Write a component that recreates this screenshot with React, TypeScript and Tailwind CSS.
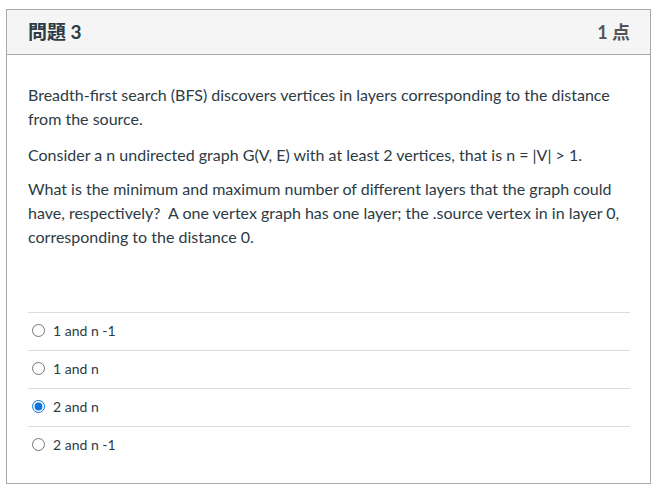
import { useState } from "react";

const ANSWERS = ["1 and n -1", "1 and n", "2 and n", "2 and n -1"];

export default function App() {
  const [selected, setSelected] = useState(2);

  return (
    <div
      className="w-[657px] h-[490px] bg-white pt-[9px] pl-[6px]"
      style={{ fontFamily: "Lato, 'Noto Sans CJK JP', sans-serif" }}
    >
      <div className="w-[645px] h-[475px] border border-[#a9a9a9] flex flex-col text-[#2d3b45]">
        {/* Header */}
        <div className="h-[45px] shrink-0 bg-[#f5f5f5] border-b border-[#a9a9a9] flex items-center justify-between pl-[21px] pr-[20px]">
          <h2 className="text-[19px] font-bold text-[#2d3b45]">問題 3</h2>
          <span className="text-[18px] font-bold text-[#555]">1 点</span>
        </div>

        {/* Body */}
        <div className="flex-1 pl-[21px] pr-[20px] pt-[28px]">
          <div className="text-[16px] leading-[24px]">
            <p className="mb-[12px]">
              Breadth-first search (BFS) discovers vertices in layers corresponding to the distance
              from the source.
            </p>
            <p className="mb-[10px]">
              Consider a n undirected graph G(V, E) with at least 2 vertices, that is n = |V| &gt; 1.
            </p>
            <p>
              What is the minimum and maximum number of different layers that the graph could
              have, respectively?&nbsp; A one vertex graph has one layer; the .source vertex in in
              layer 0, corresponding to the distance 0.
            </p>
          </div>

          <div className="mt-[63px]">
            {ANSWERS.map((a, i) => (
              <label
                key={a}
                className="h-[38px] border-t border-[#dcdcdc] flex items-center gap-[8px] pl-[4px] pb-[3px] text-[14px] cursor-pointer"
              >
                <input
                  type="radio"
                  name="q3"
                  checked={selected === i}
                  onChange={() => setSelected(i)}
                  className="w-[13px] h-[13px] m-0 mt-[1px] accent-[#0b74de]"
                />
                <span>{a}</span>
              </label>
            ))}
          </div>
        </div>
      </div>
    </div>
  );
}
